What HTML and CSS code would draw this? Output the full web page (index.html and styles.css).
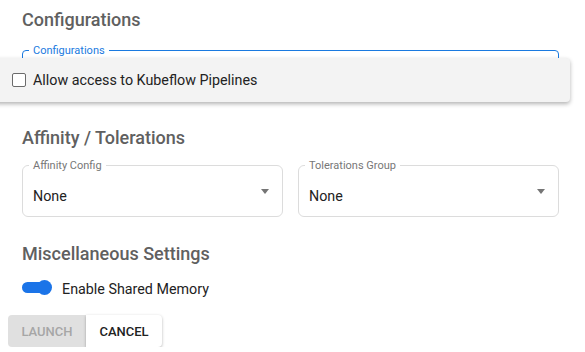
FILE: index.html
```html
<!DOCTYPE html>
<html lang="en">

<head>
    <meta charset="UTF-8">
    <meta name="viewport" content="width=device-width, initial-scale=1.0">
    <title>Launch Notebook</title>
    <link rel="stylesheet" href="styles.css">
</head>

<body>
    <div id="formulario">
        <div class="seccion seccion-config">
            <h2 class="titulo">Configurations</h2>
            <fieldset class="campo campo-activo">
                <legend>Configurations</legend>
                <div class="campo-vacio"></div>
            </fieldset>
            <div class="menu">
                <label class="opcion">
                    <span class="casilla"></span>
                    <span>Allow access to Kubeflow Pipelines</span>
                </label>
            </div>
        </div>

        <div class="seccion seccion-afinidad">
            <h2 class="titulo">Affinity / Tolerations</h2>
            <div class="fila-selects">
                <fieldset class="campo campo-select">
                    <legend>Affinity Config</legend>
                    <span class="valor">None</span>
                    <span class="flecha"></span>
                </fieldset>
                <fieldset class="campo campo-select">
                    <legend>Tolerations Group</legend>
                    <span class="valor">None</span>
                    <span class="flecha"></span>
                </fieldset>
            </div>
        </div>

        <div class="seccion seccion-varios">
            <h2 class="titulo">Miscellaneous Settings</h2>
            <div class="fila-toggle">
                <span class="toggle"><span class="perilla"></span></span>
                <span class="texto-toggle">Enable Shared Memory</span>
            </div>
        </div>

        <div class="botones">
            <button class="boton boton-launch" disabled>Launch</button>
            <button class="boton boton-cancel">Cancel</button>
        </div>
    </div>
</body>

</html>
```

FILE: styles.css
```css
body {
    margin: 0;
    font-family: Roboto, "Liberation Sans", sans-serif;
    color: #222;
    background-color: white;
    overflow: hidden;
}

#formulario {
    padding: 8px 26px 0 22px;
}

.titulo {
    margin: 0;
    font-size: 18px;
    line-height: 24px;
    font-weight: 500;
    color: #606060;
}

.seccion-config {
    position: relative;
}

.campo {
    margin: 0;
    border: 1px solid #dcdcdc;
    border-radius: 6px;
    padding: 0 10px;
    min-width: 0;
}

.campo legend {
    font-size: 11px;
    line-height: 13px;
    color: #777;
    padding: 0 4px;
    margin-left: -4px;
}

.campo-activo {
    margin-top: 12px;
    border: 1.5px solid #1a7ae0;
    border-radius: 4px;
}

.campo-activo legend {
    color: #1a7ae0;
}

.campo-vacio {
    height: 43px;
}

.menu {
    position: absolute;
    top: 50px;
    left: -32px;
    width: 580px;
    height: 44px;
    background-color: #f3f3f3;
    border-radius: 4px;
    box-shadow: 0 2px 4px rgba(0, 0, 0, 0.3);
    display: flex;
    align-items: center;
}

.opcion {
    display: flex;
    align-items: center;
    gap: 7px;
    padding-left: 22px;
    font-size: 14.3px;
    color: #222;
}

.casilla {
    width: 12px;
    height: 12px;
    border: 1.5px solid #6b6b6b;
    border-radius: 2px;
    background-color: white;
}

.seccion-afinidad {
    margin-top: 25px;
}

.fila-selects {
    display: flex;
    gap: 15px;
    margin-top: 9px;
}

.campo-select {
    flex: 1;
    position: relative;
    padding: 14px 10px 10px;
}

.valor {
    display: block;
    font-size: 14.3px;
    line-height: 20px;
}

.flecha {
    position: absolute;
    right: 13px;
    top: 17px;
    border-left: 4.5px solid transparent;
    border-right: 4.5px solid transparent;
    border-top: 5px solid #757575;
}

.seccion-varios {
    margin-top: 25px;
}

.fila-toggle {
    display: flex;
    align-items: center;
    gap: 10px;
    margin-top: 11px;
    height: 20px;
    font-size: 14.3px;
}

.texto-toggle {
    padding-top: 3px;
}

.toggle {
    position: relative;
    width: 28px;
    height: 11px;
    border-radius: 6px;
    background-color: #1b74e8;
    margin-right: 2px;
}

.perilla {
    position: absolute;
    right: -2px;
    top: -2px;
    width: 15px;
    height: 15px;
    border-radius: 50%;
    background-color: #1b74e8;
}

.botones {
    display: flex;
    margin: 18px 0 0 -14px;
}

.boton {
    font-family: Roboto, "Liberation Sans", sans-serif;
    font-size: 13px;
    font-weight: 500;
    text-transform: uppercase;
    height: 32px;
    border: none;
    padding: 0;
}

.boton-launch {
    width: 78px;
    background-color: #e0e0e0;
    color: #a6a6a6;
    border-radius: 4px 0 0 4px;
}

.boton-cancel {
    width: 76px;
    background-color: white;
    color: #222;
    border-radius: 0 4px 4px 0;
    box-shadow: 0 1px 3px rgba(0, 0, 0, 0.3);
    cursor: pointer;
}
```
